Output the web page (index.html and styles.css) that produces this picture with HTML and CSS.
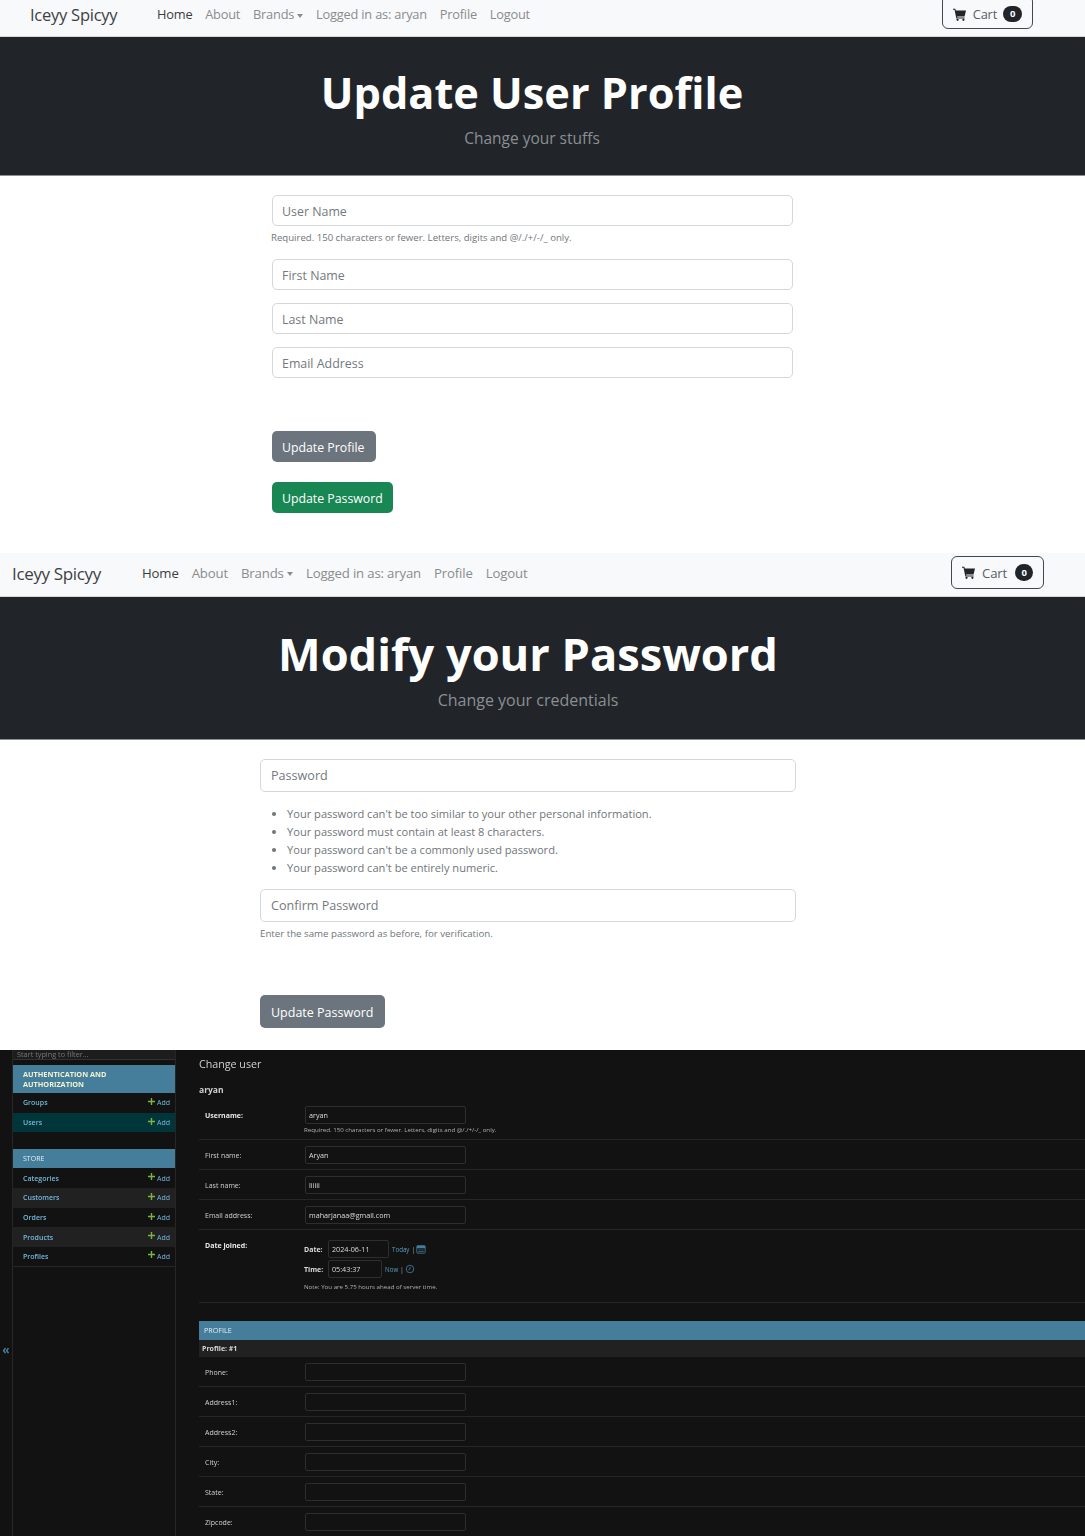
FILE: index.html
```html
<!DOCTYPE html>
<html lang="en">

<head>
  <meta charset="UTF-8" />
  <meta name="viewport" content="width=device-width, initial-scale=1.0" />
  <title>Update User Profile</title>
  <link rel="stylesheet" href="styles.css">
</head>

<body>
  <svg class="sprite" width="0" height="0">
    <symbol id="cart" viewBox="0 0 16 16">
      <path d="M0 1h2.900l.5 2H16l-1.800 7.500H5l.3 1.200h9v1.300H4.100L1.900 2.300H0z" />
      <circle cx="5.600" cy="14.600" r="1.400" />
      <circle cx="12.800" cy="14.600" r="1.400" />
    </symbol>
    <symbol id="plus" viewBox="0 0 10 10">
      <path d="M4 0h2v4h4v2H6v4H4V6H0V4h4z" />
    </symbol>
  </svg>

  <!-- first screenshot: profile -->
  <section class="shot shot-a">
    <nav class="navbar">
      <div class="nav-inner">
        <a class="brand">Iceyy Spicyy</a>
        <ul class="nav-links">
          <li class="active">Home</li>
          <li>About</li>
          <li>Brands <span class="caret"></span></li>
          <li>Logged in as: aryan</li>
          <li>Profile</li>
          <li>Logout</li>
        </ul>
        <button class="cart-btn">
          <svg class="cart-icon"><use href="#cart" /></svg>
          Cart
          <span class="badge">0</span>
        </button>
      </div>
    </nav>
    <header class="hero">
      <h1>Update User Profile</h1>
      <p>Change your stuffs</p>
    </header>
    <form class="form-box">
      <input class="field" type="text" placeholder="User Name" />
      <small class="hint hint-user">Required. 150 characters or fewer. Letters, digits and @/./+/-/_ only.</small>
      <input class="field" type="text" placeholder="First Name" />
      <input class="field" type="text" placeholder="Last Name" />
      <input class="field" type="text" placeholder="Email Address" />
      <button type="button" class="btn btn-grey">Update Profile</button>
      <button type="button" class="btn btn-green">Update Password</button>
    </form>
  </section>

  <!-- second screenshot: password -->
  <section class="shot shot-b">
    <nav class="navbar">
      <div class="nav-inner">
        <a class="brand">Iceyy Spicyy</a>
        <ul class="nav-links">
          <li class="active">Home</li>
          <li>About</li>
          <li>Brands <span class="caret"></span></li>
          <li>Logged in as: aryan</li>
          <li>Profile</li>
          <li>Logout</li>
        </ul>
        <button class="cart-btn">
          <svg class="cart-icon"><use href="#cart" /></svg>
          Cart
          <span class="badge">0</span>
        </button>
      </div>
    </nav>
    <header class="hero">
      <h1>Modify your Password</h1>
      <p>Change your credentials</p>
    </header>
    <form class="form-box">
      <input class="field" type="text" placeholder="Password" />
      <ul class="rules">
        <li>Your password can't be too similar to your other personal information.</li>
        <li>Your password must contain at least 8 characters.</li>
        <li>Your password can't be a commonly used password.</li>
        <li>Your password can't be entirely numeric.</li>
      </ul>
      <input class="field" type="text" placeholder="Confirm Password" />
      <small class="hint">Enter the same password as before, for verification.</small>
      <button type="button" class="btn btn-grey">Update Password</button>
    </form>
  </section>

  <!-- third screenshot: django admin, dark -->
  <section class="admin">
    <div class="toggle">«</div>

    <aside class="sidebar">
      <input class="filter" type="text" placeholder="Start typing to filter..." />
      <div class="app-head strong">AUTHENTICATION AND AUTHORIZATION</div>
      <div class="app-row"><a>Groups</a><span class="add"><svg><use href="#plus" /></svg>Add</span></div>
      <div class="app-row current"><a>Users</a><span class="add"><svg><use href="#plus" /></svg>Add</span></div>
      <div class="app-head store">STORE</div>
      <div class="app-row"><a>Categories</a><span class="add"><svg><use href="#plus" /></svg>Add</span></div>
      <div class="app-row alt"><a>Customers</a><span class="add"><svg><use href="#plus" /></svg>Add</span></div>
      <div class="app-row"><a>Orders</a><span class="add"><svg><use href="#plus" /></svg>Add</span></div>
      <div class="app-row alt"><a>Products</a><span class="add"><svg><use href="#plus" /></svg>Add</span></div>
      <div class="app-row line"><a>Profiles</a><span class="add"><svg><use href="#plus" /></svg>Add</span></div>
    </aside>

    <main class="admin-main">
      <h2>Change user</h2>
      <h3>aryan</h3>

      <div class="row">
        <label class="req">Username:</label>
        <div>
          <input class="inp" type="text" value="aryan" />
          <p class="help">Required. 150 characters or fewer. Letters, digits and @/./+/-/_ only.</p>
        </div>
      </div>
      <div class="row">
        <label>First name:</label>
        <input class="inp" type="text" value="Aryan" />
      </div>
      <div class="row">
        <label>Last name:</label>
        <input class="inp" type="text" value="liiiii" />
      </div>
      <div class="row">
        <label>Email address:</label>
        <input class="inp" type="text" value="maharjanaa@gmail.com" />
      </div>
      <div class="row row-date">
        <label class="req">Date joined:</label>
        <div>
          <div class="dt">
            <b>Date:</b>
            <input class="inp inp-date" type="text" value="2024-06-11" />
            <a>Today</a> |
            <svg class="mini" viewBox="0 0 12 12">
              <rect x="1" y="2" width="10" height="9" rx="1" fill="none" stroke="#447e9b" />
              <path d="M1 2h10v3H1zM3 6.500h1.500v1H3zM5.300 6.500h1.500v1H5.300zM7.600 6.500h1.500v1H7.600zM3 8.500h1.500v1H3zM5.300 8.500h1.500v1H5.300zM7.600 8.500h1.500v1H7.600z" fill="#447e9b" />
            </svg>
          </div>
          <div class="dt">
            <b>Time:</b>
            <input class="inp inp-time" type="text" value="05:43:37" />
            <a>Now</a> |
            <svg class="mini" viewBox="0 0 12 12">
              <circle cx="6" cy="6" r="4.500" fill="none" stroke="#447e9b" />
              <path d="M6 3.500V6l-1.800 1" fill="none" stroke="#447e9b" />
            </svg>
          </div>
          <p class="help note">Note: You are 5.75 hours ahead of server time.</p>
        </div>
      </div>

      <div class="inline-head">PROFILE</div>
      <div class="inline-sub">Profile: #1</div>
      <div class="row"><label>Phone:</label><input class="inp" type="text" /></div>
      <div class="row"><label>Address1:</label><input class="inp" type="text" /></div>
      <div class="row"><label>Address2:</label><input class="inp" type="text" /></div>
      <div class="row"><label>City:</label><input class="inp" type="text" /></div>
      <div class="row"><label>State:</label><input class="inp" type="text" /></div>
      <div class="row"><label>Zipcode:</label><input class="inp" type="text" /></div>
    </main>
  </section>
</body>

</html>
```

FILE: styles.css
```css
* {
  box-sizing: border-box;
}

html,
body {
  margin: 0;
  height: 1536px;
  overflow: hidden;
  background-color: #fff;
  font-family: "Open Sans", "Noto Sans", sans-serif;
}

.sprite {
  position: absolute;
}

/* navbar and hero, shared by the two bootstrap shots */
.navbar {
  background-color: #f8f9fa;
  border-bottom: 1px solid #d5d7d9;
}

.nav-inner {
  display: flex;
  align-items: center;
  height: 100%;
}

.brand {
  color: #3d4043;
}

.nav-links {
  display: flex;
  list-style: none;
  margin: 0;
  padding: 0;
  color: #8a8c8e;
  letter-spacing: -0.16px;
}

.nav-links .active {
  color: #3a3d40;
}

.caret {
  display: inline-block;
  vertical-align: middle;
  border-top: 4px solid #8a8c8e;
  border-left: 3.500px solid transparent;
  border-right: 3.500px solid transparent;
}

.cart-btn {
  display: flex;
  align-items: center;
  margin-left: auto;
  background: transparent;
  border: 1px solid #43484d;
  border-radius: 6px;
  color: #5a5f64;
  font-family: inherit;
  letter-spacing: -0.2px;
}

.cart-icon {
  fill: #212529;
}

.badge {
  display: inline-block;
  background-color: #212529;
  color: #fff;
  border-radius: 10px;
  font-weight: 700;
  text-align: center;
}

.hero {
  background-color: #212529;
  border-bottom: 1px solid #8d9093;
  text-align: center;
}

.hero h1 {
  margin: 0;
  color: #fff;
  font-weight: 700;
}

.hero p {
  margin: 0;
  color: #8b8f93;
}

.form-box {
  display: flex;
  flex-direction: column;
  align-items: flex-start;
  margin: 0 auto;
}

.field {
  display: block;
  width: 100%;
  border: 1px solid #d4d7da;
  border-radius: 5px;
  background: #fff;
  font-family: inherit;
  color: #212529;
}

.field::placeholder {
  color: #75797e;
  opacity: 1;
}

.hint {
  color: #70757a;
}

.btn {
  border: 0;
  border-radius: 5px;
  color: #fff;
  font-family: inherit;
  text-align: left;
  white-space: nowrap;
}

.btn-grey {
  background-color: #6c757d;
}

.btn-green {
  background-color: #198754;
}

/* first shot */
.shot-a {
  height: 553px;
  overflow: hidden;
}

.shot-a .navbar {
  height: 37px;
}

.shot-a .nav-inner {
  width: 1064px;
  align-items: flex-start;
  padding-left: 30px;
  padding-right: 31px;
}

.shot-a .brand {
  width: 127px;
  padding-top: 3px;
  font-size: 16.500px;
  letter-spacing: -0.25px;
}

.shot-a .nav-links {
  gap: 12.800px;
  padding-top: 5px;
  font-size: 12.800px;
  letter-spacing: -0.2px;
}

.shot-a .cart-btn {
  gap: 7px;
  height: 34px;
  margin-top: -5px;
  padding: 4px 10px 0;
  font-size: 12.800px;
}

.shot-a .cart-icon {
  width: 13px;
  height: 13px;
}

.shot-a .badge {
  width: 19px;
  height: 16px;
  margin-left: -1px;
  font-size: 9.500px;
  line-height: 16px;
}

.shot-a .hero {
  height: 139px;
  padding-top: 28px;
  width: 100%;
}

.shot-a .hero h1 {
  width: 1064px;
  font-size: 43.300px;
  line-height: 56px;
}

.shot-a .hero p {
  width: 1064px;
  margin-top: 3px;
  font-size: 15.500px;
  line-height: 28px;
}

.shot-a .form-box {
  width: 521px;
  margin-left: 272px;
  padding-top: 19px;
}

.shot-a .field {
  height: 31px;
  margin-bottom: 13px;
  padding: 2px 9px 0;
  font-size: 12.400px;
}

.shot-a .hint {
  margin: -8px 0 15px -1px;
  font-size: 9.600px;
  line-height: 13px;
}

.shot-a .btn {
  height: 31px;
  padding: 2px 10px 0;
  font-size: 12.300px;
}

.shot-a .btn-grey {
  margin-top: 40px;
  width: 104px;
}

.shot-a .btn-green {
  margin-top: 20px;
  width: 121px;
}

/* second shot, same page captured a little bigger */
.shot-b {
  height: 497px;
  overflow: hidden;
}

.shot-b .navbar {
  height: 44px;
}

.shot-b .nav-inner {
  width: 1056px;
  padding-left: 12px;
  padding-right: 12px;
  padding-bottom: 4px;
}

.shot-b .brand {
  width: 130px;
  margin-top: 2px;
  font-size: 17px;
  letter-spacing: -0.35px;
}

.shot-b .nav-links {
  gap: 13px;
  font-size: 13.200px;
}

.shot-b .cart-btn {
  gap: 7px;
  height: 33px;
  padding: 0 10px;
  font-size: 13.200px;
}

.shot-b .cart-icon {
  width: 13px;
  height: 13px;
}

.shot-b .badge {
  width: 18px;
  height: 17px;
  margin-left: 1px;
  font-size: 9.500px;
  line-height: 17px;
}

.shot-b .hero {
  height: 143px;
  padding-top: 27px;
}

.shot-b .hero h1 {
  width: 1056px;
  font-size: 45.200px;
  line-height: 60px;
}

.shot-b .hero p {
  width: 1056px;
  margin-top: 2px;
  font-size: 16px;
  line-height: 28px;
}

.shot-b .form-box {
  width: 536px;
  margin-left: 260px;
  padding-top: 19px;
}

.shot-b .field {
  height: 33px;
  padding: 0 10px;
  font-size: 12.600px;
}

.shot-b .rules {
  margin: 13px 0 12px;
  padding-left: 27px;
  color: #70757a;
  font-size: 11.100px;
  line-height: 18px;
}

.shot-b .hint {
  margin-top: 5px;
  font-size: 9.700px;
  line-height: 14px;
}

.shot-b .btn {
  height: 33px;
  width: 125px;
  margin-top: 54px;
  padding: 2px 11px 0;
  font-size: 12.500px;
}

/* django admin, dark theme. the capture is soft, hence the blur */
.admin {
  display: flex;
  height: 486px;
  overflow: hidden;
  background-color: #121212;
  color: #c8c8c8;
  font-family: "Open Sans", "Noto Sans", sans-serif;
  filter: blur(0.3px);
}

.toggle {
  flex: 0 0 13px;
  padding-top: 290px;
  border-right: 1px solid #262626;
  color: #447e9b;
  font-size: 12px;
  font-weight: 700;
  line-height: 20px;
  text-align: center;
}

.sidebar {
  flex: 0 0 163px;
  border-right: 1px solid #262626;
}

.filter {
  display: block;
  width: 100%;
  height: 17px;
  margin: -7px 0 5px;
  padding: 6px 4px 0;
  border: 0;
  border-bottom: 1px solid #333;
  background: #1d1d1d;
  font-family: inherit;
  font-size: 7.300px;
}

.filter::placeholder {
  color: #777;
  opacity: 1;
}

.app-head {
  padding: 5px 10px;
  background-color: #447e9b;
  color: #e4eef3;
  font-size: 7px;
  line-height: 10px;
}

.app-head.strong {
  height: 28px;
  color: #f5f3cf;
  font-size: 7.300px;
  font-weight: 700;
  padding-top: 4px;
  padding-right: 40px;
}

.app-head.store {
  height: 19px;
  margin-top: 17px;
  padding-top: 5px;
}

.app-row {
  display: flex;
  align-items: center;
  justify-content: space-between;
  height: 19.700px;
  padding: 0 5px 0 10px;
  font-size: 7px;
  font-weight: 600;
  color: #74b9dc;
}

.app-row.alt {
  background-color: #212121;
}

.app-row.current {
  background-color: #00363a;
}

.app-row.line {
  border-bottom: 1px solid #262626;
}

.add {
  display: flex;
  align-items: center;
  gap: 2px;
  font-weight: 400;
}

.add svg {
  width: 7px;
  height: 7px;
  margin-top: -3px;
  fill: #7cb342;
}

.admin-main {
  flex: 1;
  padding-left: 23px;
}

.admin-main h2 {
  margin: 6px 0 0;
  color: #cfcfcf;
  font-size: 10.700px;
  font-weight: 400;
  line-height: 16px;
}

.admin-main h3 {
  margin: 11px 0 0;
  color: #d0d0d0;
  font-size: 8.500px;
  font-weight: 700;
  line-height: 14px;
}

.row {
  display: flex;
  align-items: flex-start;
  padding: 6px 0 5px 6px;
  border-bottom: 1px solid #262626;
}

.row label {
  flex: 0 0 100px;
  margin-top: 1px;
  color: #d0d0d0;
  font-size: 7px;
  line-height: 17px;
}

.row label.req {
  color: #e8e8e8;
  font-weight: 700;
}

.admin-main h3 + .row {
  margin-top: 3px;
}

.inp {
  display: block;
  width: 161px;
  height: 18px;
  padding: 0 3px;
  border: 1px solid #2e2e2e;
  border-radius: 2px;
  background: #121212;
  color: #dcdcdc;
  font-family: inherit;
  font-size: 7.200px;
}

.help {
  margin: 2px 0 0 -1px;
  color: #b0b0b0;
  font-size: 6.150px;
  line-height: 8px;
}

.row-date {
  padding-top: 4px;
  padding-bottom: 11px;
}

.row-date label {
  margin-top: 3px;
}

.row-date .dt {
  display: flex;
  align-items: center;
  gap: 3px;
  height: 20px;
  margin-top: 5px;
  margin-left: -1px;
  color: #a8a8a8;
  font-size: 6.200px;
}

.row-date .dt + .dt {
  margin-top: 0;
}

.dt b {
  width: 21px;
  color: #dcdcdc;
  font-size: 7px;
}

.dt a {
  margin-right: -1px;
  color: #5a9cc0;
}

.inp-date {
  width: 61px;
}

.inp-time {
  width: 54px;
}

.mini {
  width: 10px;
  height: 10px;
  margin-left: -2px;
}

.note {
  margin-top: 4px;
}

.inline-head {
  height: 19px;
  margin-top: 18px;
  padding-left: 5px;
  background-color: #447e9b;
  color: #e4eef3;
  font-size: 7.200px;
  line-height: 19px;
}

.inline-sub {
  height: 17px;
  padding-left: 3px;
  background-color: #212121;
  color: #d6d6d6;
  font-size: 7px;
  font-weight: 700;
  line-height: 17px;
}
```
